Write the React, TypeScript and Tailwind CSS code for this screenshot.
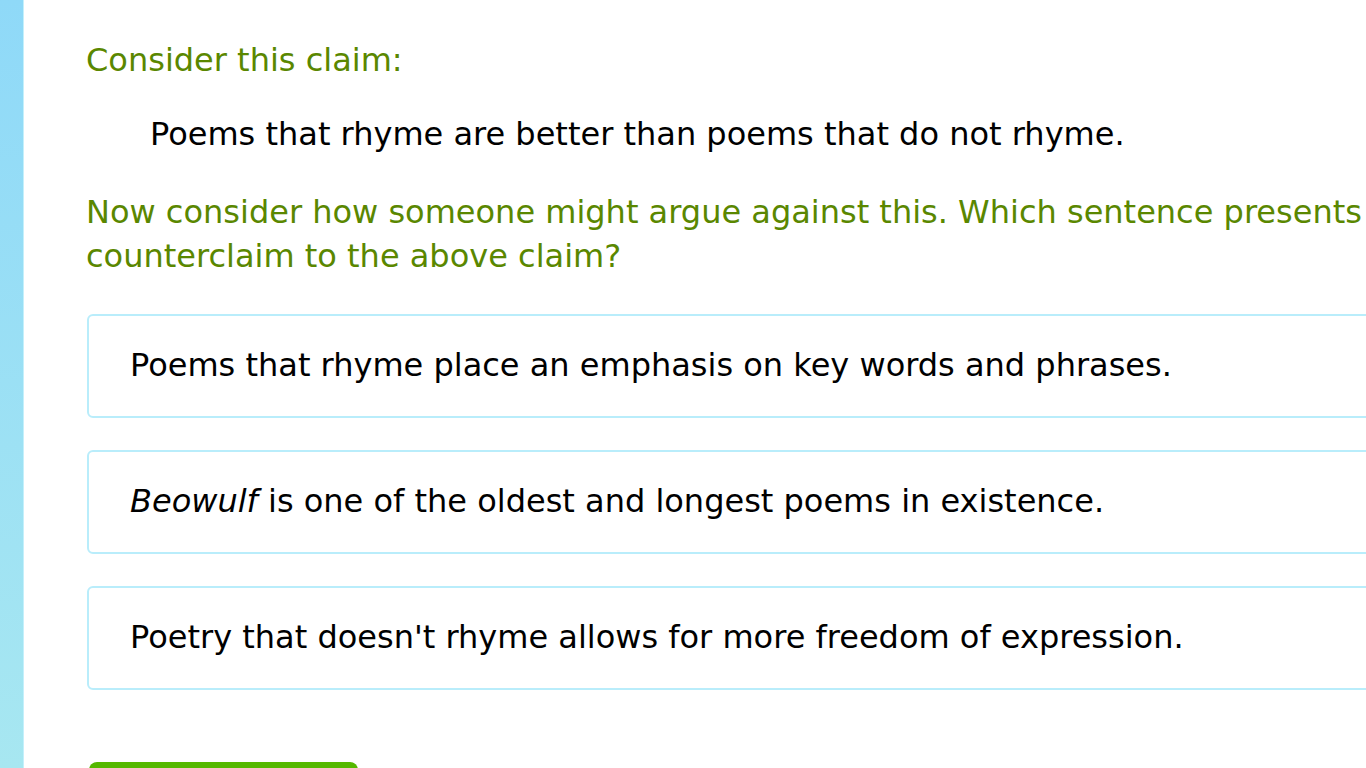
import React from "react";

const options: React.ReactNode[] = [
  <>Poems that rhyme place an emphasis on key words and phrases.</>,
  <>
    <i>Beowulf</i> is one of the oldest and longest poems in existence.
  </>,
  <>Poetry that doesn't rhyme allows for more freedom of expression.</>,
];

export default function App() {
  return (
    <div
      className="flex h-[768px] w-full overflow-hidden bg-white text-[32px] leading-[44px]"
      style={{ fontFamily: '"DejaVu Sans", Verdana, sans-serif' }}
    >
      <div className="w-[24px] shrink-0 border-r border-[#c4f0fb] bg-gradient-to-b from-[#8fd9f8] to-[#a7e7f1]" />
      <div className="w-[1500px] shrink-0 pl-[62px] pt-[38px]">
        <p className="text-[#5a8700]">Consider this claim:</p>
        <p className="mt-[30px] pl-[64px] text-black">
          Poems that rhyme are better than poems that do not rhyme.
        </p>
        <p className="mt-[34px] w-[1340px] text-[#5a8700]">
          Now consider how someone might argue against this. Which sentence presents a counterclaim to the above claim?
        </p>
        <div className="mt-[36px] ml-[1px] flex flex-col gap-[32px]">
          {options.map((o, i) => (
            <div
              key={i}
              className="w-[1420px] rounded-[6px] border-2 border-[#b9edfb] pl-[41px] pt-[27px] pb-[29px] text-black"
            >
              {o}
            </div>
          ))}
        </div>
        <div className="mt-[72px] ml-[3px] h-[40px] w-[269px] rounded-[8px] bg-[#55b800]" />
      </div>
    </div>
  );
}
